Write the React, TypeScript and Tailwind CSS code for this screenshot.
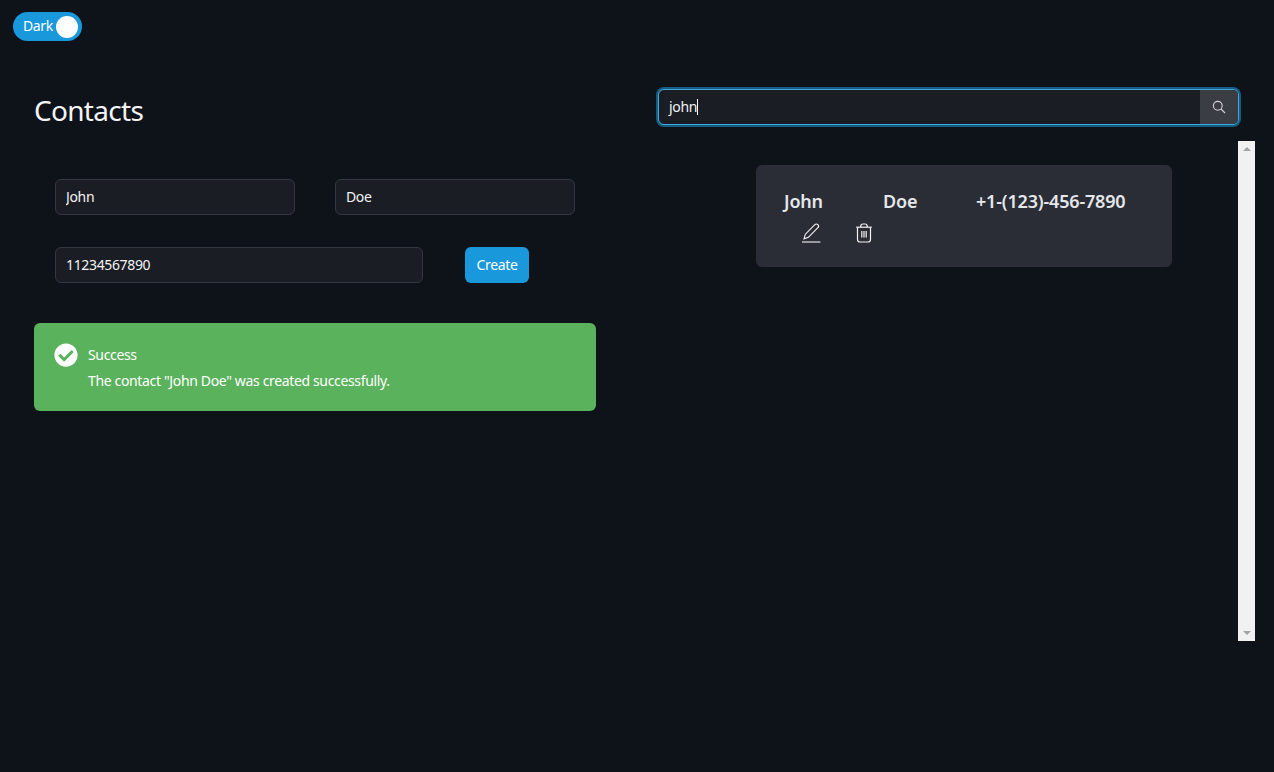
import { FaCheckCircle } from "react-icons/fa";

const inputClass =
  "h-9 rounded-md border border-[#33373f] bg-[#1a1d24] px-2.5 pb-0.5 text-sm tracking-tight text-gray-100 outline-none";

function PenIcon() {
  return (
    <svg viewBox="0 0 20 20" className="h-5 w-5" fill="none" stroke="currentColor" strokeWidth="1.1">
      <path d="M3 15.8 L4.4 11.2 L13.8 1.6 C14.7 0.7 16 0.7 16.9 1.6 C17.8 2.5 17.8 3.8 16.9 4.7 L7.4 14.3 Z" />
      <path d="M1 19 H19.4" />
    </svg>
  );
}

function TrashIcon() {
  return (
    <svg viewBox="0 0 18 20" className="h-5 w-[18px]" fill="none" stroke="currentColor" strokeWidth="1.2">
      <path d="M1.2 4.2 H16.8" />
      <path d="M5.8 4 V3 C5.8 1.8 6.8 1 8 1 H10 C11.2 1 12.2 1.8 12.2 3 V4" />
      <path d="M2.5 4.4 V16.5 C2.5 18 3.5 19 5 19 H13 C14.5 19 15.5 18 15.5 16.5 V4.4" />
      <path d="M6.8 8 V14.5 M9 8 V14.5 M11.2 8 V14.5" />
    </svg>
  );
}

function SearchIcon() {
  return (
    <svg viewBox="0 0 14 14" className="h-3.5 w-3.5" fill="none" stroke="#d4d4d8" strokeWidth="1.1">
      <circle cx="5.8" cy="5.8" r="4.4" />
      <path d="M9 9 L13 13" />
    </svg>
  );
}

export default function App() {
  return (
    <div
      className="min-h-screen bg-[#0e131a] text-sm text-gray-100"
      style={{ fontFamily: '"Noto Sans", "Open Sans", sans-serif' }}
    >
      <div className="pl-[13px] pt-3">
        <div className="flex h-[29px] w-[69px] items-center justify-between rounded-full bg-[#1a98dc] pl-2.5 pr-1 tracking-tight text-white">
          <span className="pb-0.5">Dark</span>
          <span className="h-[22px] w-[22px] rounded-full bg-white" />
        </div>
      </div>

      <div className="flex items-start pt-12">
        <div className="ml-[34px] w-[562px]">
          <h1 className="mt-px text-[28px] leading-10 tracking-tight text-gray-100">Contacts</h1>
          <div className="ml-px mt-[49px] flex flex-col gap-8 pl-5">
            <div className="flex gap-10">
              <input className={`w-60 ${inputClass}`} defaultValue="John" />
              <input className={`w-60 ${inputClass}`} defaultValue="Doe" />
            </div>
            <div className="flex gap-10">
              <input className={`w-[368px] ${inputClass}`} defaultValue="11234567890" />
              <button className="ml-0.5 h-9 w-16 rounded-md bg-[#1a98dc] tracking-tight text-white">Create</button>
            </div>
          </div>
          <div className="mt-10 flex h-[88px] gap-2.5 rounded-md bg-[#5ab25c] px-5 py-5 tracking-tight text-white">
            <FaCheckCircle className="h-6 w-6 shrink-0" />
            <div className="flex flex-col gap-1.5 pt-0.5">
              <p>Success</p>
              <p>The contact "John Doe" was created successfully.</p>
            </div>
          </div>
        </div>

        <div className="ml-[62px] w-[581px]">
          <div className="flex h-9 overflow-hidden rounded-md border border-[#3fa9dc] bg-[#1a1d24] shadow-[0_0_0_2px_#175c80]">
            <div className="flex flex-1 items-center pl-2.5 tracking-tight">
              <span>john</span>
              <span className="h-4 w-px bg-white" />
            </div>
            <div className="flex w-9.5 items-center justify-center bg-[#3a3d44]">
              <SearchIcon />
            </div>
          </div>

          <div className="mt-4 flex h-[500px] w-[597px]">
            <div className="flex-1 pt-6">
              <div className="ml-[98px] h-[102px] w-[416px] rounded-md bg-[#2a2d35] px-7 pt-6">
                <div className="flex text-lg font-semibold leading-6 tracking-[-0.01em] text-gray-200">
                  <span className="w-[99px]">John</span>
                  <span className="w-[93px]">Doe</span>
                  <span>+1-(123)-456-7890</span>
                </div>
                <div className="mt-2.5 flex gap-[34px] pl-[17px] text-gray-100">
                  <PenIcon />
                  <TrashIcon />
                </div>
              </div>
            </div>
            <div className="flex w-[17px] flex-col items-center justify-between bg-[#f1f1f1] py-1.5">
              <span className="h-0 w-0 border-x-4 border-b-4 border-x-transparent border-b-[#a3a3a3]" />
              <span className="h-0 w-0 border-x-4 border-t-4 border-x-transparent border-t-[#a3a3a3]" />
            </div>
          </div>
        </div>
      </div>
    </div>
  );
}
